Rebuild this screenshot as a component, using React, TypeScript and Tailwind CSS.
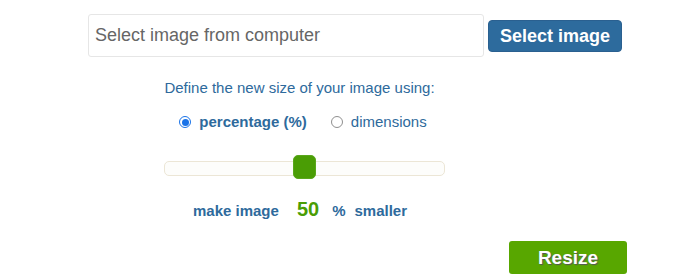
export default function App() {
  const percent = 50;

  return (
    <div className="w-[700px] h-[279px] bg-white font-['Liberation_Sans',Arial,sans-serif] overflow-hidden">
      <div className="flex items-center gap-[4px] pl-[88px] pt-[14px]">
        <div className="w-[396px] h-[43px] border border-[#e6e6e6] rounded-[3px] flex items-center px-[6px] text-[18px] text-[#666666]">
          Select image from computer
        </div>
        <button className="w-[134px] h-[32px] rounded-[4px] bg-[#2d6b9d] border border-[#2a6090] text-white font-bold text-[18px] leading-none">
          Select image
        </button>
      </div>

      <div className="ml-[164px] w-[281px] flex flex-col items-center">
        <p className="mt-[22px] mr-[10px] text-[15px] leading-[18px] text-[#2e6a9c] text-center">
          Define the new size of your image using:
        </p>

        <div className="mt-[16px] flex items-center text-[15px] leading-[18px] text-[#2e6a9c] -ml-[3px]">
          <label className="flex items-center">
            <span className="w-[12px] h-[12px] rounded-full border border-[#1a73e8] flex items-center justify-center">
              <span className="w-[7px] h-[7px] rounded-full bg-[#1a73e8]" />
            </span>
            <span className="ml-[8px] font-bold">percentage (%)</span>
          </label>
          <label className="flex items-center ml-[24px]">
            <span className="w-[12px] h-[12px] rounded-full border border-[#8f8f8f]" />
            <span className="ml-[8px]">dimensions</span>
          </label>
        </div>

        <div className="relative mt-[30px] w-[281px] h-[15px] rounded-[5px] border border-[#ece6d6] bg-[#fdfdfb]">
          <div className="absolute left-[128px] top-[-7px] w-[23px] h-[24px] rounded-[5px] bg-[#4a9d05] border border-[#5aa71c]" />
        </div>

        <div className="mt-[18px] flex items-baseline text-[15px] font-bold text-[#2e6a9c] -ml-[9px]">
          <span>make image</span>
          <span className="ml-[18px] text-[20px] text-[#4a9d05]">{percent}</span>
          <span className="ml-[13px]">%</span>
          <span className="ml-[9px]">smaller</span>
        </div>
      </div>

      <div className="pl-[509px] mt-[17px]">
        <button className="w-[118px] h-[33px] rounded-[3px] bg-[#58a700] text-white font-bold text-[19px] leading-none [text-shadow:1px_1px_1px_#555]">
          Resize
        </button>
      </div>
    </div>
  );
}
